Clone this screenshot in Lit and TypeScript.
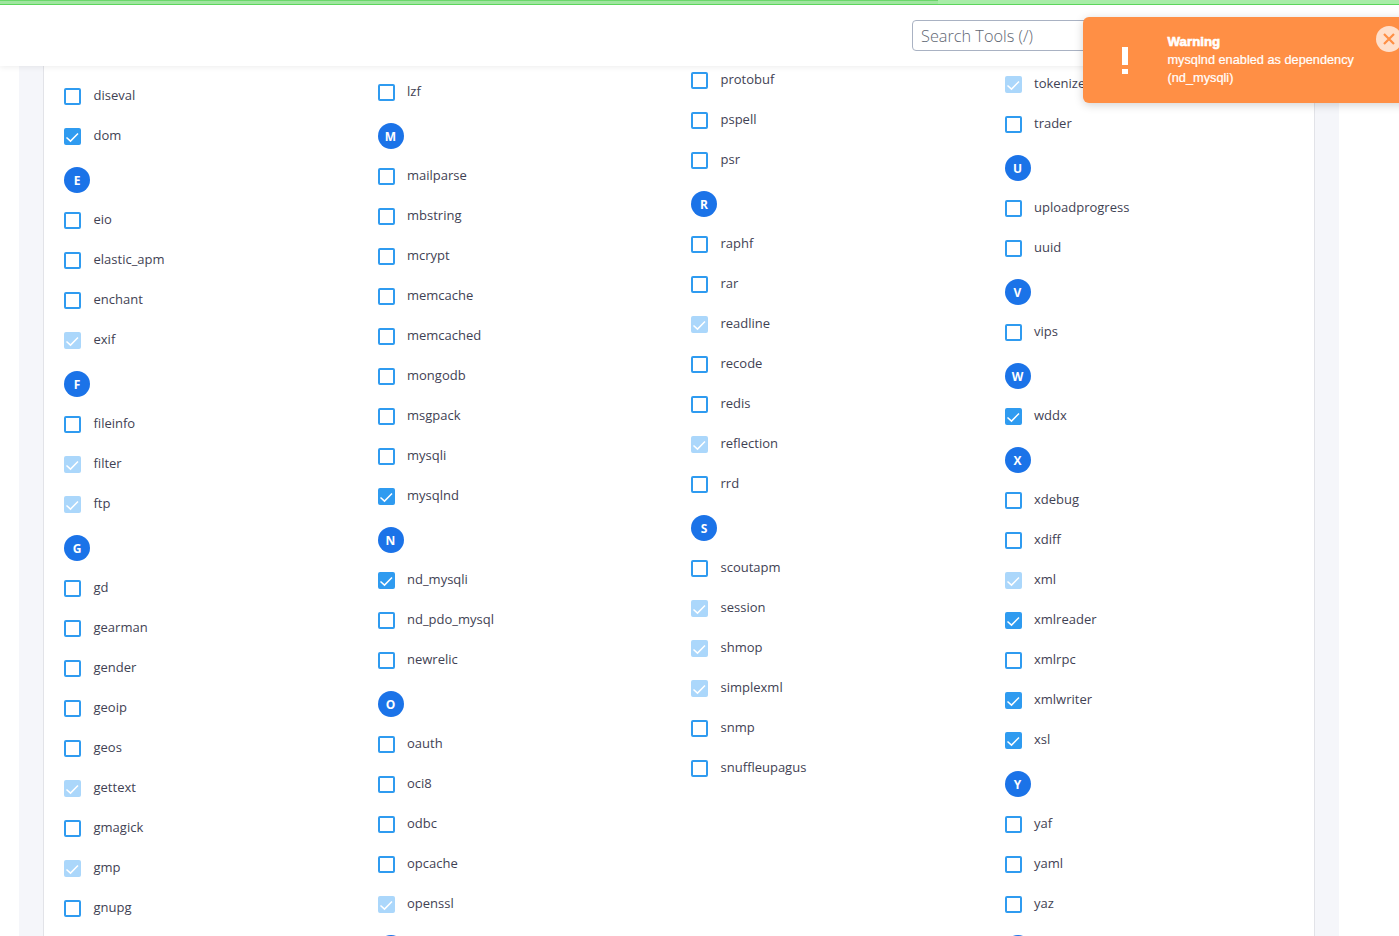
import { LitElement, html, css } from "lit";
import { customElement } from "lit/decorators.js";

type Entry = string;
// prefix: "#" heading, "+" checked, "~" checked and disabled, none: unchecked
const COLUMNS: { cls: string; items: Entry[] }[] = [
  { cls: "c1", items: ["diseval","+dom","#E","eio","elastic_apm","enchant","~exif","#F","fileinfo","~filter","~ftp","#G","gd","gearman","gender","geoip","geos","~gettext","gmagick","~gmp","gnupg"] },
  { cls: "c2", items: ["lzf","#M","mailparse","mbstring","mcrypt","memcache","memcached","mongodb","msgpack","mysqli","+mysqlnd","#N","+nd_mysqli","nd_pdo_mysql","newrelic","#O","oauth","oci8","odbc","opcache","~openssl","#P"] },
  { cls: "c3", items: ["protobuf","pspell","psr","#R","raphf","rar","~readline","recode","redis","~reflection","rrd","#S","scoutapm","~session","~shmop","~simplexml","snmp","snuffleupagus"] },
  { cls: "c4", items: ["~tokenizer","trader","#U","uploadprogress","uuid","#V","vips","#W","+wddx","#X","xdebug","xdiff","~xml","+xmlreader","xmlrpc","+xmlwriter","+xsl","#Y","yaf","yaml","yaz","#Z"] },
];

@customElement("app-root")
export class AppRoot extends LitElement {
  static styles = css`
    :host { display: block; width: 1399px; height: 936px; overflow: hidden; position: relative; background: #fff;
      font-family: "Open Sans", sans-serif; color: #3f4254; }
    .progress { position: absolute; z-index: 5; top: 0; left: 0; right: 0; height: 5px; background: #a8eda8; border-bottom: 1px solid #5cd65c; box-sizing: border-box; }
    .progress i { display: block; width: 938px; height: 4px; background: #9fe59f; border-top: 1px solid #6ad86a; box-sizing: border-box; }
    .header { position: absolute; z-index: 2; top: 0; left: 0; right: 0; height: 66px; background: #fff;
      box-shadow: 0 1px 6px rgba(0,0,0,.08); display: flex; justify-content: flex-end; align-items: flex-start; padding: 20px 27px 0 0; box-sizing: border-box; }
    .search { width: 460px; height: 31px; box-sizing: border-box; border: 1px solid #a9b2c3; border-radius: 4px; padding: 0 8px;
      font: 300 16.3px "Open Sans", sans-serif; color: #5f6773; line-height: 31px; }
    .page { height: 936px; margin: 0 60px 0 19px; background: #f5f6fa; padding: 0 24px; box-sizing: border-box; }
    .card { height: 936px; background: #fff; border: solid #e2e3e8; border-width: 0 1px; padding: 0 0 0 20px; box-sizing: border-box;
      display: grid; grid-template-columns: repeat(4, 313.5px); overflow: hidden; }
    .c1 { padding-top: 76px; } .c2 { padding-top: 72px; } .c3 { padding-top: 60px; } .c4 { padding-top: 64px; }
    .row { height: 40px; display: flex; align-items: center; gap: 12.5px; font-size: 13px; white-space: nowrap; }
    .row span { position: relative; top: -1px; }
    .box { width: 17px; height: 17px; box-sizing: border-box; border: 2px solid #2f9bf0; border-radius: 2px; position: relative; top: 0.5px; flex: none; }
    .box svg { display: block; width: 17px; height: 17px; margin: -2px; }
    .box.on { background: #2f9bf0; }
    .box.dis { background: #abd7fb; border-color: #abd7fb; }
    .head { height: 44px; display: flex; align-items: flex-end; padding-bottom: 7px; box-sizing: border-box; }
    .circle { width: 26px; height: 26px; border-radius: 50%; background: #1b73e8; color: #fff; font-size: 12px; font-weight: 700;
      display: flex; align-items: center; justify-content: center; }
    .toast { position: absolute; z-index: 4; top: 17px; left: 1083px; width: 340px; height: 86px; background: #ff8f45; border-radius: 6px;
      box-shadow: 0 2px 10px rgba(0,0,0,.18); color: #fff; display: flex; font: 12.75px/18px "Liberation Sans", sans-serif; box-sizing: border-box; }
    .bang { flex: none; width: 84px; display: flex; align-items: center; justify-content: center; }
    .msg { padding: 16px 0 0 0.5px; width: 200px; -webkit-text-stroke: 0.2px #fff; }
    .msg b { display: block; font-weight: 700; font-size: 13.3px; -webkit-text-stroke: 0.6px #fff; }
    .close { position: absolute; left: 293px; top: 9px; width: 26px; height: 26px; border-radius: 50%; background: #ffdfcb; display: flex; align-items: center; justify-content: center; }
  `;

  private check() {
    return html`<svg viewBox="0 0 17 17" fill="none" stroke="#fff" stroke-width="1.5"><path d="M2.5 9.5l4 3.6 7.5-7.6"/></svg>`;
  }

  private entry(e: Entry) {
    if (e[0] === "#") return html`<div class="head"><div class="circle">${e.slice(1)}</div></div>`;
    const on = e[0] === "+", dis = e[0] === "~";
    const name = on || dis ? e.slice(1) : e;
    return html`<div class="row"><div class="box ${on ? "on" : dis ? "dis" : ""}">${on || dis ? this.check() : ""}</div><span>${name}</span></div>`;
  }

  render() {
    return html`
      <div class="progress"><i></i></div>
      <header class="header"><div class="search">Search Tools (/)</div></header>
      <div class="page"><div class="card">
        ${COLUMNS.map(c => html`<div class="${c.cls}">${c.items.map(i => this.entry(i))}</div>`)}
      </div></div>
      <div class="toast">
        <div class="bang"><svg width="8" height="27" viewBox="0 0 8 27" fill="#fff"><rect x="1" width="6" height="18"/><rect x="1" y="22" width="6" height="5"/></svg></div>
        <div class="msg"><b>Warning</b>mysqlnd enabled as dependency (nd_mysqli)</div>
        <div class="close"><svg width="14" height="14" viewBox="0 0 14 14" stroke="#ff8f45" stroke-width="2.2" fill="none"><path d="M2 2l10 10M12 2L2 12"/></svg></div>
      </div>
    `;
  }
}
